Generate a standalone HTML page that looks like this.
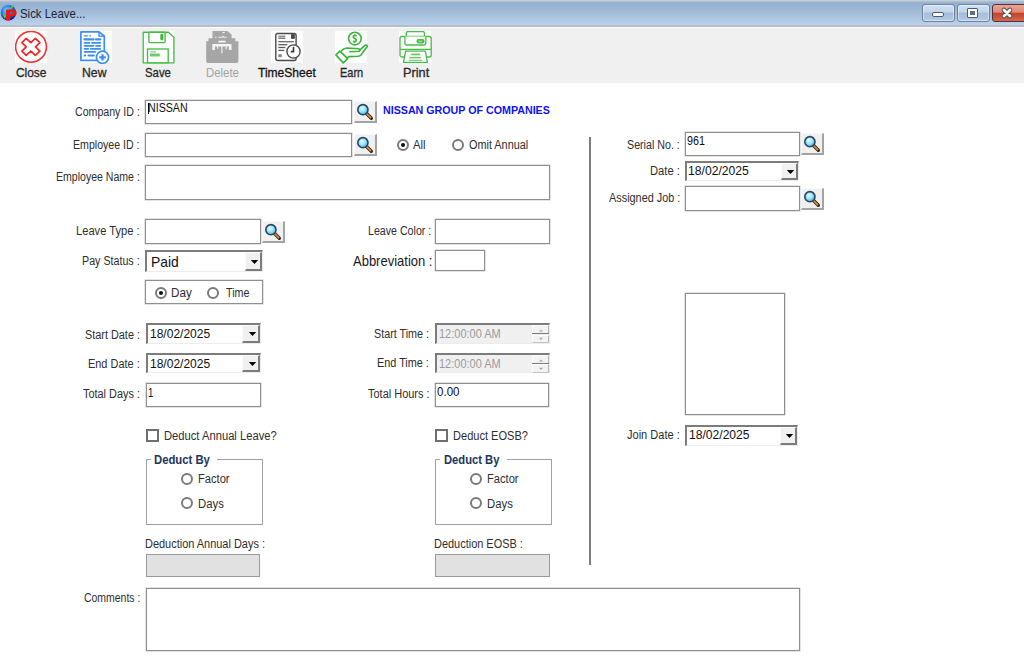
<!DOCTYPE html>
<html><head><meta charset="utf-8"><title>Sick Leave...</title>
<style>
html,body{margin:0;padding:0;width:1024px;height:665px;overflow:hidden;background:#fff;}
#w{position:relative;width:1024px;height:665px;overflow:hidden;font-family:"Liberation Sans",sans-serif;}
#w div,#w span,#w svg{position:absolute;box-sizing:border-box;}
.t{white-space:pre;transform-origin:0 0;}
.tb{border:1px solid #8f8f8f;background:#fff;}
.sb{background:#f0f0f0;border-right:2px solid #a3a3a3;border-bottom:2px solid #a3a3a3;border-top:1px solid #f8f8f8;border-left:1px solid #f8f8f8;}
.cb{border-top:2px solid #7c7c7c;border-left:2px solid #7c7c7c;border-bottom:1px solid #ececec;border-right:1px solid #ececec;background:#fff;}
.dd{background:#f0f0f0;border-top:1px solid #fbfbfb;border-left:1px solid #fbfbfb;border-right:2px solid #7c7c7c;border-bottom:2px solid #7c7c7c;}
.rd{border:2px solid #7a7a7a;border-radius:50%;background:#fff;}
.ck{border:2px solid #6f6f6f;background:#fff;}
.gb{border:1px solid #a0a0a0;}
</style></head><body><div id="w">
<div style="left:0;top:0;width:1024px;height:1.2px;background:#cbcdcf"></div>
<div style="left:0;top:1.2px;width:1024px;height:24px;background:linear-gradient(#b0c4dc 0px,#93afcf 2px,#a3bdda 50%,#bad2eb 100%)"></div>
<div style="left:0;top:25.2px;width:1024px;height:1.6px;background:#b7bec6"></div>
<div style="left:0;top:26.8px;width:1024px;height:1.4px;background:#fbfbfb"></div>
<div style="left:0;top:28.2px;width:1024px;height:54.8px;background:#f0f0f0"></div>
<svg style="left:0px;top:4px" width="18" height="18" viewBox="0 0 18 18">
<defs><radialGradient id="glb" cx="0.4" cy="0.35" r="0.65"><stop offset="0" stop-color="#7fe0ff"/><stop offset="0.45" stop-color="#2a8ae8"/><stop offset="1" stop-color="#0b1f8f"/></radialGradient></defs>
<circle cx="8.4" cy="8.8" r="7.7" fill="url(#glb)"/>
<path d="M3 9.5 L4.8 13.2 L6.5 9" stroke="#33e033" stroke-width="1.3" fill="none"/>
<path d="M10 5 L13.8 1.6" stroke="#33e033" stroke-width="1.3"/>
<path d="M6 5.6 L12.8 5.6 Q16.6 5.6 16.6 9 Q16.6 12.3 12.8 12.3 L10.2 12.3 L10.2 16.6 L6 16.6 Z M10.2 8 L10.2 10 L12 10 Q12.9 10 12.9 9 Q12.9 8 12 8 Z" fill="#f21414" fill-rule="evenodd"/>
</svg>
<span class="t" style="left:20.43px;top:6.47px;font-size:13.5px;line-height:16px;font-weight:400;color:#1b2433;transform:scaleX(0.8463);">Sick Leave...</span>
<div style="left:922px;top:4px;width:33px;height:18px;border:1px solid #6f819b;border-radius:3px;background:linear-gradient(#d2e1f2 0%,#c0d4ea 45%,#a3bcd9 50%,#b4cbe4 100%);box-shadow:inset 0 0 0 1px rgba(255,255,255,0.45)"></div>
<div style="left:932px;top:12px;width:12px;height:5px;background:#fff;border:1px solid #4f5b6b;border-radius:2px"></div>
<div style="left:957px;top:4px;width:33px;height:18px;border:1px solid #6f819b;border-radius:3px;background:linear-gradient(#d2e1f2 0%,#c0d4ea 45%,#a3bcd9 50%,#b4cbe4 100%);box-shadow:inset 0 0 0 1px rgba(255,255,255,0.45)"></div>
<div style="left:967px;top:8px;width:11px;height:10px;background:#fff;border:1px solid #4f5b6b;border-radius:1px"></div>
<div style="left:970px;top:11px;width:5px;height:4px;background:#5e6f86"></div>
<div style="left:992px;top:4px;width:36px;height:18px;border:1px solid #5a2e34;border-radius:3px;background:linear-gradient(#eaa597 0%,#de8a76 45%,#c2432a 52%,#d06a4e 100%)"></div>
<svg style="left:1000px;top:6px" width="14" height="14" viewBox="0 0 14 14">
<path d="M4 4 L10 10 M10 4 L4 10" stroke="#5a4848" stroke-width="4.6" stroke-linecap="round"/>
<path d="M4 4 L10 10 M10 4 L4 10" stroke="#fbfbfb" stroke-width="2.8" stroke-linecap="round"/>
</svg>
<div style="left:14.5px;top:31px;width:32px;height:32px;background:#fdfdfd"></div>
<div style="left:79.5px;top:31px;width:32px;height:32px;background:#fdfdfd"></div>
<div style="left:142px;top:31px;width:32px;height:32px;background:#fdfdfd"></div>
<div style="left:270.7px;top:31px;width:32px;height:32px;background:#fdfdfd"></div>
<div style="left:334.8px;top:31px;width:32px;height:32px;background:#fdfdfd"></div>
<div style="left:398.8px;top:31px;width:32px;height:32px;background:#fdfdfd"></div>
<svg style="left:14.5px;top:31px" width="33" height="33" viewBox="0 0 33 33">
<circle cx="16" cy="15.8" r="15.4" fill="#fff" stroke="#f53030" stroke-width="1.6"/>
<path d="M15.8 11.6 L20.4 7.3 L24.9 11.6 L20.5 15.9 L24.9 20.1 L20.4 24.4 L15.8 20.1 L11.2 24.4 L6.9 20.1 L11.2 15.9 L6.9 11.6 L11.2 7.3 Z" fill="#fff" stroke="#f52424" stroke-width="1.7" stroke-linejoin="round"/>
</svg>
<span class="t" style="left:15.90px;top:64.77px;font-size:13px;line-height:15px;font-weight:400;color:#2e2e2e;transform:scaleX(0.9159);-webkit-text-stroke:0.3px #1e1e1e">Close</span>
<svg style="left:79.5px;top:30.5px" width="33" height="33" viewBox="0 0 33 33">
<path d="M0.9 0.9 L19 0.9 L24.3 5.2 L24.3 29.3 L0.9 29.3 Z" fill="#fff" stroke="#3b8ff0" stroke-width="1.7" stroke-linejoin="round"/>
<path d="M19 0.9 L19 5 L24.3 5.2" fill="none" stroke="#3b8ff0" stroke-width="1.4"/>
<g stroke="#3b8ff0" stroke-linecap="round">
<line x1="4.2" y1="4.8" x2="7.5" y2="4.8" stroke-width="1.2"/><line x1="9.6" y1="4.8" x2="10.8" y2="4.8" stroke-width="1.2"/>
<line x1="4.4" y1="8.3" x2="13.5" y2="8.3" stroke-width="2.2"/><line x1="15.9" y1="8.3" x2="20.3" y2="8.3" stroke-width="2.2"/>
<line x1="4.4" y1="11.9" x2="9.5" y2="11.9" stroke-width="1.6"/><line x1="11.9" y1="11.9" x2="20.3" y2="11.9" stroke-width="1.6"/>
<line x1="4.4" y1="14.9" x2="13.5" y2="14.9" stroke-width="1.6"/><line x1="15.9" y1="14.9" x2="20.3" y2="14.9" stroke-width="1.6"/>
<line x1="4.4" y1="17.9" x2="8.3" y2="17.9" stroke-width="1.6"/><line x1="10.7" y1="17.9" x2="20.3" y2="17.9" stroke-width="1.6"/>
<line x1="4.4" y1="20.9" x2="15.2" y2="20.9" stroke-width="1.6"/>
<line x1="4.6" y1="24.5" x2="5.1" y2="24.5" stroke-width="2"/><line x1="8.6" y1="24.5" x2="13.8" y2="24.5" stroke-width="2.2"/>
</g>
<circle cx="22.5" cy="26.3" r="6.1" fill="#fff" stroke="#3b8ff0" stroke-width="1.7"/>
<path d="M22.5 23.2 V29.6 M19.3 26.3 H25.7" stroke="#3b8ff0" stroke-width="2.3"/>
</svg>
<span class="t" style="left:82.39px;top:64.77px;font-size:13px;line-height:15px;font-weight:400;color:#2e2e2e;transform:scaleX(0.9409);-webkit-text-stroke:0.3px #1e1e1e">New</span>
<svg style="left:142px;top:30.5px" width="34" height="34" viewBox="0 0 34 34">
<path d="M1.2 1.2 L26.4 1.2 L31.9 6.3 L31.9 31.8 L1.2 31.8 Z" fill="#fff" stroke="#45bb45" stroke-width="1.35" stroke-linejoin="round"/>
<rect x="6.9" y="1.2" width="16.2" height="10.4" rx="1" fill="#fff" stroke="#45bb45" stroke-width="1.35"/>
<rect x="18.3" y="2.8" width="3.1" height="6.5" rx="1.2" fill="#3fba3f"/>
<rect x="5.5" y="18" width="20.7" height="13.8" fill="#fff" stroke="#45bb45" stroke-width="1.35"/>
<line x1="8.3" y1="20.9" x2="14" y2="20.9" stroke="#5cc45c" stroke-width="1"/>
<rect x="7.9" y="22.6" width="10" height="2.9" rx="1" fill="#6ccb6c"/>
</svg>
<span class="t" style="left:145.43px;top:64.77px;font-size:13px;line-height:15px;font-weight:400;color:#2e2e2e;transform:scaleX(0.8741);-webkit-text-stroke:0.3px #1e1e1e">Save</span>
<svg style="left:206.4px;top:30.8px" width="34" height="34" viewBox="0 0 34 34">
<path d="M6.5 0 L21.3 0 L25.6 3.5 L25.6 7.2 L29.3 7.2 L29.3 10.3 L32.4 10.3 L32.4 30.5 L31.2 32.1 L1.2 32.1 L0.2 30.5 L0.2 10.3 L2.5 10.3 L2.5 7.2 L6.5 7.2 Z" fill="#a6a6a6"/>
<g stroke="#f4f4f4" fill="none">
<path d="M16.5 1.5 L18.7 1.5" stroke-width="1.2"/>
<path d="M9 6.3 L10.5 6.3 M12.5 6.3 L16 6.3 L17 5.3 L18 6.3 L20.5 6.3" stroke-width="1.1"/>
<path d="M12.5 10.6 L19.6 10.6" stroke-width="1.8"/>
<path d="M7.6 19 L7.6 14.2 L24.2 14.2 L24.2 19" stroke-width="2.6"/>
<path d="M11.6 13.5 L11.6 17.8 M15.9 13.5 L15.9 22.3 M20.2 13.5 L20.2 18.3" stroke-width="1.1"/>
</g>
</svg>
<span class="t" style="left:206.43px;top:64.77px;font-size:13px;line-height:15px;font-weight:400;color:#a3a3a3;transform:scaleX(0.8758);">Delete</span>
<svg style="left:270.7px;top:30.8px" width="33" height="33" viewBox="0 0 33 33">
<rect x="4.8" y="2.5" width="20.3" height="27" rx="2" fill="#fff" stroke="#4a4a4a" stroke-width="1.4"/>
<g stroke="#5a5a5a">
<line x1="7.3" y1="5.2" x2="14.3" y2="5.2" stroke-width="1"/><line x1="7.3" y1="7.2" x2="14.3" y2="7.2" stroke-width="1.2"/>
<line x1="7.3" y1="10.7" x2="22.8" y2="10.7" stroke-width="1.2"/>
<line x1="7.3" y1="13.7" x2="16.3" y2="13.7" stroke-width="1.3"/>
<line x1="7.3" y1="16.5" x2="14.3" y2="16.5" stroke-width="1.3"/>
<line x1="7.3" y1="19.4" x2="13.3" y2="19.4" stroke-width="1.3"/>
</g>
<rect x="7.3" y="23.2" width="3.5" height="3" fill="#888"/>
<path d="M20.5 3.2 L20.5 7.4 L23.3 7.4 L23.3 3.2" fill="#444" stroke="#444" stroke-width="0.9"/>
<circle cx="22.5" cy="20.5" r="6.6" fill="#fff" stroke="#4a4a4a" stroke-width="1.4"/>
<path d="M22.5 16 L22.5 20.6 L19.8 20.6" stroke="#333" stroke-width="1.6" fill="none"/>
<path d="M22.5 14.5 V15.3 M22.5 25.7 V26.5 M16.5 20.5 H17.3 M27.7 20.5 H28.5" stroke="#777" stroke-width="0.8"/>
</svg>
<span class="t" style="left:258.40px;top:64.77px;font-size:13px;line-height:15px;font-weight:400;color:#141414;transform:scaleX(0.9258);-webkit-text-stroke:0.3px #141414">TimeSheet</span>
<svg style="left:334.8px;top:31px" width="34" height="34" viewBox="0 0 34 34">
<circle cx="19.9" cy="7.6" r="6.3" fill="#fff" stroke="#38b438" stroke-width="1.6"/>
<path d="M21.6 5.2 Q20 4 18.6 5 Q17.6 6.3 19.4 7.3 Q21.8 8.3 21 10 Q19.8 11.2 18 10.2" fill="none" stroke="#38b438" stroke-width="1.6"/>
<path d="M19.8 3.3 V4.5 M19.5 10.8 V12" stroke="#38b438" stroke-width="1.2"/>
<path d="M6.3 20 Q9 17 12 17 L23.5 17.8 Q25.8 18.6 24.3 20.3 L15 20.8" fill="none" stroke="#38b438" stroke-width="1.6" stroke-linejoin="round" stroke-linecap="round"/>
<path d="M24.6 19.3 L29.6 14.6 Q31.6 13.2 32.4 15.3 L26 24 Q25 25 23 25.2 L13.8 25.6 L11.6 27.4" fill="none" stroke="#38b438" stroke-width="1.6" stroke-linejoin="round" stroke-linecap="round"/>
<path d="M0.9 23.9 L4.9 20.1 L12.6 27.6 L8.3 31.9 Z" fill="#fff" stroke="#38b438" stroke-width="1.6" stroke-linejoin="round"/>
</svg>
<span class="t" style="left:340.15px;top:64.77px;font-size:13px;line-height:15px;font-weight:400;color:#2e2e2e;transform:scaleX(0.8438);-webkit-text-stroke:0.3px #1e1e1e">Earn</span>
<svg style="left:398.8px;top:31px" width="34" height="34" viewBox="0 0 34 34">
<rect x="7.3" y="0.6" width="18.1" height="6" rx="1.5" fill="#fff" stroke="#48bc48" stroke-width="1.3"/>
<rect x="1" y="5.5" width="31.2" height="20.5" rx="2" fill="#fff" stroke="#48bc48" stroke-width="1.3"/>
<path d="M5.9 5.5 L5.9 12 Q5.9 14 8 14 L24.8 14 Q26.8 14 26.8 12 L26.8 5.5" fill="#fff" stroke="#48bc48" stroke-width="1.3"/>
<rect x="17.5" y="8.1" width="8" height="4.3" rx="1.8" fill="#49bb49"/>
<line x1="19.5" y1="10.2" x2="23" y2="10.2" stroke="#c8ecc8" stroke-width="1"/>
<line x1="1" y1="18.4" x2="32.2" y2="18.4" stroke="#48bc48" stroke-width="1.3"/>
<path d="M6.6 20.2 L26.3 20.2 L28.4 31.4 L4.5 31.4 Z" fill="#fff" stroke="#48bc48" stroke-width="1.3" stroke-linejoin="round"/>
<line x1="12.2" y1="23.4" x2="21.2" y2="23.4" stroke="#6cc86c" stroke-width="1.8"/>
<line x1="10.2" y1="26.7" x2="22.2" y2="26.7" stroke="#5ac05a" stroke-width="1.2"/>
<line x1="9.7" y1="29.3" x2="23.2" y2="29.3" stroke="#7ad07a" stroke-width="1.2"/>
</svg>
<span class="t" style="left:402.86px;top:64.77px;font-size:13px;line-height:15px;font-weight:400;color:#2e2e2e;transform:scaleX(0.9808);-webkit-text-stroke:0.3px #1e1e1e">Print</span>
<svg style="left:0;top:0" width="1" height="1"><defs>
<radialGradient id="lens" cx="0.42" cy="0.38" r="0.62"><stop offset="0" stop-color="#e9fcff"/><stop offset="0.55" stop-color="#93e2fb"/><stop offset="1" stop-color="#43b2e0"/></radialGradient>
</defs></svg>
<span class="t" style="left:74.97px;top:105.17px;font-size:12.5px;line-height:14px;font-weight:400;color:#2e2e2e;transform:scaleX(0.8486);">Company ID :</span>
<div style="left:145px;top:100px;width:207px;height:24px;border:1px solid #8f8f8f;background:#fff;box-shadow:0 0 0 0.5px #c8c8c8"></div>
<span class="t" style="left:148.47px;top:101.27px;font-size:12.5px;line-height:14px;font-weight:400;color:#111;transform:scaleX(0.8519);">NISSAN</span>
<div style="left:147.5px;top:102.5px;width:1.6px;height:11px;background:#000"></div>
<div class="sb" style="left:354px;top:101px;width:23px;height:22px"></div>
<svg style="left:354px;top:101px" width="23" height="22" viewBox="0 0 23 22">
<line x1="12.3" y1="12.3" x2="17.3" y2="17.3" stroke="#1f2530" stroke-width="3.4" stroke-linecap="round"/>
<line x1="12.6" y1="12.6" x2="16.6" y2="16.6" stroke="#f28a14" stroke-width="1.6" stroke-linecap="round"/>
<circle cx="8.9" cy="8.7" r="5.1" fill="url(#lens)" stroke="#2b4563" stroke-width="1.6"/>
</svg>
<span class="t" style="left:382.77px;top:104.27px;font-size:11.5px;line-height:13px;font-weight:700;color:#0f0ffa;transform:scaleX(0.9282);">NISSAN GROUP OF COMPANIES</span>
<span class="t" style="left:73.27px;top:138.07px;font-size:12.5px;line-height:14px;font-weight:400;color:#2e2e2e;transform:scaleX(0.8476);">Employee ID :</span>
<div style="left:145px;top:133px;width:207px;height:24px;border:1px solid #8f8f8f;background:#fff;box-shadow:0 0 0 0.5px #c8c8c8"></div>
<div class="sb" style="left:354px;top:134px;width:23px;height:22px"></div>
<svg style="left:354px;top:134px" width="23" height="22" viewBox="0 0 23 22">
<line x1="12.3" y1="12.3" x2="17.3" y2="17.3" stroke="#1f2530" stroke-width="3.4" stroke-linecap="round"/>
<line x1="12.6" y1="12.6" x2="16.6" y2="16.6" stroke="#f28a14" stroke-width="1.6" stroke-linecap="round"/>
<circle cx="8.9" cy="8.7" r="5.1" fill="url(#lens)" stroke="#2b4563" stroke-width="1.6"/>
</svg>
<div class="rd" style="left:397px;top:138.5px;width:12px;height:12px"></div>
<div style="left:401px;top:142.5px;width:4px;height:4px;border-radius:50%;background:#111"></div>
<span class="t" style="left:413.43px;top:137.67px;font-size:12.5px;line-height:14px;font-weight:400;color:#2e2e2e;transform:scaleX(0.9065);">All</span>
<div class="rd" style="left:451.7px;top:138.7px;width:12px;height:12px"></div>
<span class="t" style="left:468.66px;top:138.17px;font-size:12.5px;line-height:14px;font-weight:400;color:#2e2e2e;transform:scaleX(0.8689);">Omit Annual</span>
<span class="t" style="left:55.97px;top:169.77px;font-size:12.5px;line-height:14px;font-weight:400;color:#2e2e2e;transform:scaleX(0.8438);">Employee Name :</span>
<div style="left:145px;top:165px;width:405px;height:35px;border:1px solid #8f8f8f;background:#fff;box-shadow:0 0 0 0.5px #c8c8c8"></div>
<span class="t" style="left:76.24px;top:223.77px;font-size:12.5px;line-height:14px;font-weight:400;color:#2e2e2e;transform:scaleX(0.8911);">Leave Type :</span>
<div style="left:145px;top:219px;width:115.5px;height:24.5px;border:1px solid #8f8f8f;background:#fff;box-shadow:0 0 0 0.5px #c8c8c8"></div>
<div class="sb" style="left:262px;top:221px;width:23px;height:22px"></div>
<svg style="left:262px;top:221px" width="23" height="22" viewBox="0 0 23 22">
<line x1="12.3" y1="12.3" x2="17.3" y2="17.3" stroke="#1f2530" stroke-width="3.4" stroke-linecap="round"/>
<line x1="12.6" y1="12.6" x2="16.6" y2="16.6" stroke="#f28a14" stroke-width="1.6" stroke-linecap="round"/>
<circle cx="8.9" cy="8.7" r="5.1" fill="url(#lens)" stroke="#2b4563" stroke-width="1.6"/>
</svg>
<span class="t" style="left:368.07px;top:223.77px;font-size:12.5px;line-height:14px;font-weight:400;color:#2e2e2e;transform:scaleX(0.8506);">Leave Color :</span>
<div style="left:434.6px;top:219px;width:115.10000000000002px;height:24.5px;border:1px solid #8f8f8f;background:#fff;box-shadow:0 0 0 0.5px #c8c8c8"></div>
<span class="t" style="left:82.17px;top:254.27px;font-size:12.5px;line-height:14px;font-weight:400;color:#2e2e2e;transform:scaleX(0.8553);">Pay Status :</span>
<div class="cb" style="left:145.4px;top:250px;width:117.6px;height:22.19999999999999px"></div>
<div class="dd" style="left:244.5px;top:252px;width:17.5px;height:19.19999999999999px"></div>
<svg style="left:249.9px;top:258.90000000000003px" width="9" height="6" viewBox="0 0 9 6"><path d="M0.8 1 L8.2 1 L4.5 5 Z" fill="#000"/></svg>
<span class="t" style="left:151.01px;top:253.16px;font-size:15px;line-height:17px;font-weight:400;color:#101010;transform:scaleX(0.9261);">Paid</span>
<span class="t" style="left:353.45px;top:252.26px;font-size:15px;line-height:17px;font-weight:400;color:#202020;transform:scaleX(0.8660);">Abbreviation :</span>
<div style="left:434.6px;top:250px;width:50.799999999999955px;height:21px;border:1px solid #8f8f8f;background:#fff;box-shadow:0 0 0 0.5px #c8c8c8"></div>
<div style="left:145.4px;top:280.3px;width:117.29999999999998px;height:24.19999999999999px;border:1px solid #8f8f8f;background:#fff;box-shadow:0 0 0 0.5px #c8c8c8"></div>
<div class="rd" style="left:154.6px;top:286.5px;width:12px;height:12px"></div>
<div style="left:158.6px;top:290.5px;width:4px;height:4px;border-radius:50%;background:#111"></div>
<span class="t" style="left:171.41px;top:285.97px;font-size:12.5px;line-height:14px;font-weight:400;color:#2e2e2e;transform:scaleX(0.9372);">Day</span>
<div class="rd" style="left:207.4px;top:286.5px;width:12px;height:12px"></div>
<span class="t" style="left:225.56px;top:285.97px;font-size:12.5px;line-height:14px;font-weight:400;color:#2e2e2e;transform:scaleX(0.8584);">Time</span>
<span class="t" style="left:84.86px;top:327.57px;font-size:12.5px;line-height:14px;font-weight:400;color:#2e2e2e;transform:scaleX(0.8693);">Start Date :</span>
<div class="cb" style="left:145.8px;top:323px;width:114.80000000000001px;height:20.5px"></div>
<div class="dd" style="left:242.10000000000002px;top:325px;width:17.5px;height:17.5px"></div>
<svg style="left:247.50000000000003px;top:331.05px" width="9" height="6" viewBox="0 0 9 6"><path d="M0.8 1 L8.2 1 L4.5 5 Z" fill="#000"/></svg>
<span class="t" style="left:149.50px;top:327.27px;font-size:12.5px;line-height:14px;font-weight:400;color:#111;transform:scaleX(0.9616);">18/02/2025</span>
<span class="t" style="left:374.36px;top:327.47px;font-size:12.5px;line-height:14px;font-weight:400;color:#2e2e2e;transform:scaleX(0.8600);">Start Time :</span>
<div class="cb" style="left:435px;top:323px;width:115.10000000000002px;height:20.5px;background:#f0f0f0"></div>
<div style="left:532.1px;top:325px;width:17px;height:8px;background:#f3f3f3;border-right:1.5px solid #b4b4b4;border-top:1px solid #fcfcfc;border-left:1px solid #fcfcfc"></div>
<div style="left:532.1px;top:332.8px;width:17px;height:1.6px;background:#7a7a7a"></div>
<div style="left:532.1px;top:334.6px;width:17px;height:8.4px;background:#f3f3f3;border-right:1.5px solid #b4b4b4;border-bottom:1.5px solid #c4c4c4;border-top:1px solid #fcfcfc;border-left:1px solid #fcfcfc"></div>
<svg style="left:537.1px;top:328px" width="8" height="4"><path d="M2 3.5 L6 3.5 L4 1.4 Z" fill="#a4a4a4"/></svg>
<svg style="left:537.1px;top:337px" width="8" height="4"><path d="M2 0.8 L6 0.8 L4 2.9 Z" fill="#a4a4a4"/></svg>
<span class="t" style="left:438.85px;top:327.27px;font-size:12.5px;line-height:14px;font-weight:400;color:#9a9a9a;transform:scaleX(0.8800);">12:00:00 AM</span>
<span class="t" style="left:88.15px;top:356.77px;font-size:12.5px;line-height:14px;font-weight:400;color:#2e2e2e;transform:scaleX(0.8747);">End Date :</span>
<div class="cb" style="left:145.8px;top:352.7px;width:114.80000000000001px;height:20.30000000000001px"></div>
<div class="dd" style="left:242.10000000000002px;top:354.7px;width:17.5px;height:17.30000000000001px"></div>
<svg style="left:247.50000000000003px;top:360.65000000000003px" width="9" height="6" viewBox="0 0 9 6"><path d="M0.8 1 L8.2 1 L4.5 5 Z" fill="#000"/></svg>
<span class="t" style="left:149.50px;top:356.57px;font-size:12.5px;line-height:14px;font-weight:400;color:#111;transform:scaleX(0.9616);">18/02/2025</span>
<span class="t" style="left:377.46px;top:356.47px;font-size:12.5px;line-height:14px;font-weight:400;color:#2e2e2e;transform:scaleX(0.8681);">End Time :</span>
<div class="cb" style="left:435px;top:352.7px;width:115.10000000000002px;height:20.30000000000001px;background:#f0f0f0"></div>
<div style="left:532.1px;top:354.7px;width:17px;height:8px;background:#f3f3f3;border-right:1.5px solid #b4b4b4;border-top:1px solid #fcfcfc;border-left:1px solid #fcfcfc"></div>
<div style="left:532.1px;top:362.5px;width:17px;height:1.6px;background:#7a7a7a"></div>
<div style="left:532.1px;top:364.3px;width:17px;height:8.4px;background:#f3f3f3;border-right:1.5px solid #b4b4b4;border-bottom:1.5px solid #c4c4c4;border-top:1px solid #fcfcfc;border-left:1px solid #fcfcfc"></div>
<svg style="left:537.1px;top:357.7px" width="8" height="4"><path d="M2 3.5 L6 3.5 L4 1.4 Z" fill="#a4a4a4"/></svg>
<svg style="left:537.1px;top:366.7px" width="8" height="4"><path d="M2 0.8 L6 0.8 L4 2.9 Z" fill="#a4a4a4"/></svg>
<span class="t" style="left:438.85px;top:356.57px;font-size:12.5px;line-height:14px;font-weight:400;color:#9a9a9a;transform:scaleX(0.8800);">12:00:00 AM</span>
<span class="t" style="left:82.85px;top:387.27px;font-size:12.5px;line-height:14px;font-weight:400;color:#2e2e2e;transform:scaleX(0.8723);">Total Days :</span>
<div style="left:145.8px;top:383px;width:114.80000000000001px;height:24.30000000000001px;border:1px solid #8f8f8f;background:#fff;box-shadow:0 0 0 0.5px #c8c8c8"></div>
<span class="t" style="left:148.42px;top:386.47px;font-size:12.5px;line-height:14px;font-weight:400;color:#111;transform:scaleX(0.7727);">1</span>
<span class="t" style="left:367.75px;top:387.27px;font-size:12.5px;line-height:14px;font-weight:400;color:#2e2e2e;transform:scaleX(0.8775);">Total Hours :</span>
<div style="left:435px;top:383px;width:114.29999999999995px;height:24.30000000000001px;border:1px solid #8f8f8f;background:#fff;box-shadow:0 0 0 0.5px #c8c8c8"></div>
<span class="t" style="left:436.52px;top:385.27px;font-size:12.5px;line-height:14px;font-weight:400;color:#111;transform:scaleX(0.9253);">0.00</span>
<div class="ck" style="left:145.6px;top:429px;width:13px;height:13px"></div>
<span class="t" style="left:163.94px;top:428.77px;font-size:12.5px;line-height:14px;font-weight:400;color:#2e2e2e;transform:scaleX(0.8959);">Deduct Annual Leave?</span>
<div class="ck" style="left:434.8px;top:429px;width:13px;height:13px"></div>
<span class="t" style="left:453.25px;top:428.77px;font-size:12.5px;line-height:14px;font-weight:400;color:#2e2e2e;transform:scaleX(0.8846);">Deduct EOSB?</span>
<div class="gb" style="left:146px;top:459px;width:116.5px;height:66px"></div>
<div style="left:150.8px;top:456px;width:66.69999999999999px;height:6px;background:#fff"></div>
<span class="t" style="left:154.23px;top:452.67px;font-size:12px;line-height:14px;font-weight:700;color:#22355e;transform:scaleX(0.9420);">Deduct By</span>
<div class="rd" style="left:180.8px;top:472.8px;width:12px;height:12px"></div>
<span class="t" style="left:197.94px;top:472.27px;font-size:12.5px;line-height:14px;font-weight:400;color:#2e2e2e;transform:scaleX(0.8915);">Factor</span>
<div class="rd" style="left:180.8px;top:497.1px;width:12px;height:12px"></div>
<span class="t" style="left:197.93px;top:496.57px;font-size:12.5px;line-height:14px;font-weight:400;color:#2e2e2e;transform:scaleX(0.9060);">Days</span>
<div class="gb" style="left:435px;top:459px;width:116.70000000000005px;height:66px"></div>
<div style="left:440.3px;top:456px;width:66.69999999999999px;height:6px;background:#fff"></div>
<span class="t" style="left:443.74px;top:452.67px;font-size:12px;line-height:14px;font-weight:700;color:#22355e;transform:scaleX(0.9335);">Deduct By</span>
<div class="rd" style="left:469.8px;top:472.8px;width:12px;height:12px"></div>
<span class="t" style="left:487.24px;top:472.27px;font-size:12.5px;line-height:14px;font-weight:400;color:#2e2e2e;transform:scaleX(0.8915);">Factor</span>
<div class="rd" style="left:469.8px;top:497.1px;width:12px;height:12px"></div>
<span class="t" style="left:487.23px;top:496.57px;font-size:12.5px;line-height:14px;font-weight:400;color:#2e2e2e;transform:scaleX(0.9060);">Days</span>
<span class="t" style="left:145.35px;top:536.77px;font-size:12.5px;line-height:14px;font-weight:400;color:#2e2e2e;transform:scaleX(0.8764);">Deduction Annual Days :</span>
<div style="left:146px;top:553.5px;width:114.39999999999998px;height:23.799999999999955px;border:1px solid #9a9a9a;background:#e1e1e1"></div>
<span class="t" style="left:434.25px;top:536.77px;font-size:12.5px;line-height:14px;font-weight:400;color:#2e2e2e;transform:scaleX(0.8760);">Deduction EOSB :</span>
<div style="left:434.8px;top:553.5px;width:114.90000000000003px;height:23.799999999999955px;border:1px solid #9a9a9a;background:#e1e1e1"></div>
<span class="t" style="left:83.98px;top:590.97px;font-size:12.5px;line-height:14px;font-weight:400;color:#2e2e2e;transform:scaleX(0.8360);">Comments :</span>
<div style="left:145.5px;top:588px;width:654.7px;height:63px;border:1px solid #8f8f8f;background:#fff;box-shadow:0 0 0 0.5px #c8c8c8"></div>
<div style="left:589px;top:137px;width:2px;height:428px;background:#7d7d7d"></div>
<span class="t" style="left:627.27px;top:137.87px;font-size:12.5px;line-height:14px;font-weight:400;color:#2e2e2e;transform:scaleX(0.8546);">Serial No. :</span>
<div style="left:685px;top:131.5px;width:115px;height:24.5px;border:1px solid #8f8f8f;background:#fff;box-shadow:0 0 0 0.5px #c8c8c8"></div>
<span class="t" style="left:687.16px;top:134.27px;font-size:12.5px;line-height:14px;font-weight:400;color:#111;transform:scaleX(0.8560);">961</span>
<div class="sb" style="left:801px;top:133px;width:23px;height:22px"></div>
<svg style="left:801px;top:133px" width="23" height="22" viewBox="0 0 23 22">
<line x1="12.3" y1="12.3" x2="17.3" y2="17.3" stroke="#1f2530" stroke-width="3.4" stroke-linecap="round"/>
<line x1="12.6" y1="12.6" x2="16.6" y2="16.6" stroke="#f28a14" stroke-width="1.6" stroke-linecap="round"/>
<circle cx="8.9" cy="8.7" r="5.1" fill="url(#lens)" stroke="#2b4563" stroke-width="1.6"/>
</svg>
<span class="t" style="left:650.44px;top:164.27px;font-size:12.5px;line-height:14px;font-weight:400;color:#2e2e2e;transform:scaleX(0.8962);">Date :</span>
<div class="cb" style="left:685px;top:161px;width:114px;height:20px"></div>
<div class="dd" style="left:780.5px;top:163px;width:17.5px;height:17px"></div>
<svg style="left:785.9px;top:168.8px" width="9" height="6" viewBox="0 0 9 6"><path d="M0.8 1 L8.2 1 L4.5 5 Z" fill="#000"/></svg>
<span class="t" style="left:688.29px;top:164.27px;font-size:12.5px;line-height:14px;font-weight:400;color:#111;transform:scaleX(0.9714);">18/02/2025</span>
<span class="t" style="left:608.96px;top:191.47px;font-size:12.5px;line-height:14px;font-weight:400;color:#2e2e2e;transform:scaleX(0.8704);">Assigned Job :</span>
<div style="left:685px;top:186.4px;width:115px;height:24.400000000000006px;border:1px solid #8f8f8f;background:#fff;box-shadow:0 0 0 0.5px #c8c8c8"></div>
<div class="sb" style="left:801px;top:188px;width:23px;height:22px"></div>
<svg style="left:801px;top:188px" width="23" height="22" viewBox="0 0 23 22">
<line x1="12.3" y1="12.3" x2="17.3" y2="17.3" stroke="#1f2530" stroke-width="3.4" stroke-linecap="round"/>
<line x1="12.6" y1="12.6" x2="16.6" y2="16.6" stroke="#f28a14" stroke-width="1.6" stroke-linecap="round"/>
<circle cx="8.9" cy="8.7" r="5.1" fill="url(#lens)" stroke="#2b4563" stroke-width="1.6"/>
</svg>
<div style="left:685.3px;top:293px;width:99.5px;height:122.30000000000001px;border:1px solid #8f8f8f;background:#fff;box-shadow:0 0 0 0.5px #c8c8c8"></div>
<span class="t" style="left:627.35px;top:428.27px;font-size:12.5px;line-height:14px;font-weight:400;color:#2e2e2e;transform:scaleX(0.8832);">Join Date :</span>
<div class="cb" style="left:685.3px;top:425.3px;width:113.10000000000002px;height:20.30000000000001px"></div>
<div class="dd" style="left:779.9px;top:427.3px;width:17.5px;height:17.30000000000001px"></div>
<svg style="left:785.3px;top:433.25000000000006px" width="9" height="6" viewBox="0 0 9 6"><path d="M0.8 1 L8.2 1 L4.5 5 Z" fill="#000"/></svg>
<span class="t" style="left:688.69px;top:428.27px;font-size:12.5px;line-height:14px;font-weight:400;color:#111;transform:scaleX(0.9681);">18/02/2025</span>
</div></body></html>
